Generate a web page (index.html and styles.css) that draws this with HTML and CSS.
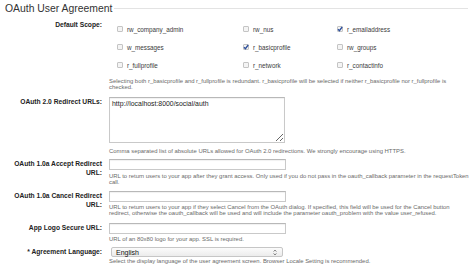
FILE: index.html
```html
<!DOCTYPE html>
<html>
<head>
    <meta name="viewport" content="width=device-width, initial-scale=1">
    <link rel="stylesheet" href="styles.css">
</head>
<body>
    <div class="page">
        <h2 class="section-title">OAuth User Agreement</h2>

        <div class="form-row scope-row">
            <label class="row-label">Default Scope:</label>
            <div class="row-field">
                <div class="scope-grid">
                    <div class="scope-item"><span class="box"></span>rw_company_admin</div>
                    <div class="scope-item"><span class="box"></span>rw_nus</div>
                    <div class="scope-item"><span class="box checked"><svg viewBox="0 0 6 6"><path d="M1 3.2 L2.4 4.7 L5.2 1" /></svg></span>r_emailaddress</div>
                    <div class="scope-item"><span class="box"></span>w_messages</div>
                    <div class="scope-item"><span class="box checked"><svg viewBox="0 0 6 6"><path d="M1 3.2 L2.4 4.7 L5.2 1" /></svg></span>r_basicprofile</div>
                    <div class="scope-item"><span class="box"></span>rw_groups</div>
                    <div class="scope-item"><span class="box"></span>r_fullprofile</div>
                    <div class="scope-item"><span class="box"></span>r_network</div>
                    <div class="scope-item"><span class="box"></span>r_contactinfo</div>
                </div>
                <div class="help help-scope">Selecting both r_basicprofile and r_fullprofile is redundant. r_basicprofile will be selected if neither r_basicprofile nor r_fullprofile is<br>checked.</div>
            </div>
        </div>

        <div class="form-row redirect-row">
            <label class="row-label" for="redirectUrls">OAuth 2.0 Redirect URLs:</label>
            <div class="row-field">
                <textarea id="redirectUrls" class="text-area">http://localhost:8000/social/auth</textarea>
                <div class="help help-area">Comma separated list of absolute URLs allowed for OAuth 2.0 redirections. We strongly encourage using HTTPS.</div>
            </div>
        </div>

        <div class="form-row accept-row">
            <label class="row-label" for="acceptUrl">OAuth 1.0a Accept Redirect URL:</label>
            <div class="row-field">
                <input type="text" id="acceptUrl" class="text-input">
                <div class="help">URL to return users to your app after they grant access. Only used if you do not pass in the oauth_callback parameter in the requestToken<br>call.</div>
            </div>
        </div>

        <div class="form-row cancel-row">
            <label class="row-label" for="cancelUrl">OAuth 1.0a Cancel Redirect URL:</label>
            <div class="row-field">
                <input type="text" id="cancelUrl" class="text-input">
                <div class="help help-tight">URL to return users to your app if they select Cancel from the OAuth dialog. If specified, this field will be used for the Cancel button<br>redirect, otherwise the oauth_callback will be used and will include the parameter oauth_problem with the value user_refused.</div>
            </div>
        </div>

        <div class="form-row logo-row">
            <label class="row-label" for="logoUrl">App Logo Secure URL:</label>
            <div class="row-field">
                <input type="text" id="logoUrl" class="text-input">
                <div class="help help-tight">URL of an 80x80 logo for your app. SSL is required.</div>
            </div>
        </div>

        <div class="form-row language-row">
            <label class="row-label">* Agreement Language:</label>
            <div class="row-field">
                <div class="select-box">
                    <span>English</span>
                    <svg class="select-arrows" viewBox="0 0 4 7"><path d="M0.6 2.6 L2 1 L3.4 2.6 M0.6 4.4 L2 6 L3.4 4.4" /></svg>
                </div>
                <div class="help help-select">Select the display language of the user agreement screen. Browser Locale Setting is recommended.</div>
            </div>
        </div>
    </div>
</body>
</html>
```

FILE: styles.css
```css
body {
    margin: 0;
    background: #fff;
    font-family: "Liberation Sans", Arial, sans-serif;
    color: #333;
    overflow: hidden;
}
.page {
    padding: 3px 6px 0 0;
}
.section-title {
    display: flex;
    align-items: center;
    gap: 2px;
    margin: 0 0 0 5px;
    font-size: 10.4px;
    line-height: 12px;
    font-weight: normal;
    color: #333;
}
.section-title::after {
    content: "";
    flex: 1;
    border-top: 1px solid #e3e3e3;
    margin-top: -2px;
}
.form-row {
    display: grid;
    grid-template-columns: 102px 358px;
    column-gap: 7px;
}
.row-label {
    text-align: right;
    font-size: 6.7px;
    line-height: 9px;
    font-weight: bold;
    color: #222;
}
.scope-row {
    margin-top: 5px;
}
.redirect-row {
    margin-top: 7px;
}
.accept-row {
    margin-top: 5px;
}
.cancel-row {
    margin-top: 6px;
}
.logo-row {
    margin-top: 7px;
}
.language-row {
    margin-top: 5px;
}
.scope-grid {
    display: grid;
    grid-template-columns: 126px 94px auto;
    grid-auto-rows: 18px;
    padding-left: 8px;
}
.scope-item {
    display: flex;
    align-items: center;
    gap: 4px;
    font-size: 6.3px;
    color: #3a3a3a;
}
.box {
    width: 4px;
    height: 4px;
    border: 1px solid #c4c4c4;
    border-radius: 1px;
    background: #f4f4f4;
    position: relative;
}
.box svg {
    position: absolute;
    left: -1px;
    top: -1px;
    width: 6px;
    height: 6px;
}
.box svg path {
    fill: none;
    stroke: #2d4f9c;
    stroke-width: 1.3;
}
.help {
    margin-top: 3px;
    font-size: 5.9px;
    line-height: 6px;
    color: #6a6a6a;
    white-space: nowrap;
}
.help-scope {
    margin-top: 4px;
}
.help-area {
    margin-top: 5px;
}
.help-tight {
    margin-top: 2px;
}
.help-select {
    margin-top: 1px;
}
.text-area {
    display: block;
    width: 176px;
    height: 46px;
    margin: 0;
    padding: 2px 2px;
    box-sizing: border-box;
    border: 1px solid #c9c9c9;
    border-top-color: #b8b8b8;
    border-radius: 0;
    font-family: "Liberation Sans", Arial, sans-serif;
    font-size: 6.9px;
    line-height: 8px;
    color: #222;
    box-shadow: inset 0 1px 1px rgba(0,0,0,0.06);
}
.text-input {
    display: block;
    width: 177px;
    height: 11px;
    margin: 0;
    padding: 0 2px;
    box-sizing: border-box;
    border: 1px solid #c9c9c9;
    border-top-color: #b8b8b8;
    border-radius: 0;
    box-shadow: inset 0 1px 1px rgba(0,0,0,0.06);
}
.select-box {
    display: flex;
    align-items: center;
    justify-content: space-between;
    width: 172px;
    height: 10px;
    margin-left: 2px;
    padding: 0 5px 0 4px;
    box-sizing: border-box;
    border: 1px solid #c6c6c6;
    border-radius: 2px;
    background: linear-gradient(#fbfbfb, #ececec);
    font-size: 7px;
    color: #111;
}
.select-arrows {
    width: 4px;
    height: 7px;
}
.select-arrows path {
    fill: none;
    stroke: #555;
    stroke-width: 0.7;
}
```
